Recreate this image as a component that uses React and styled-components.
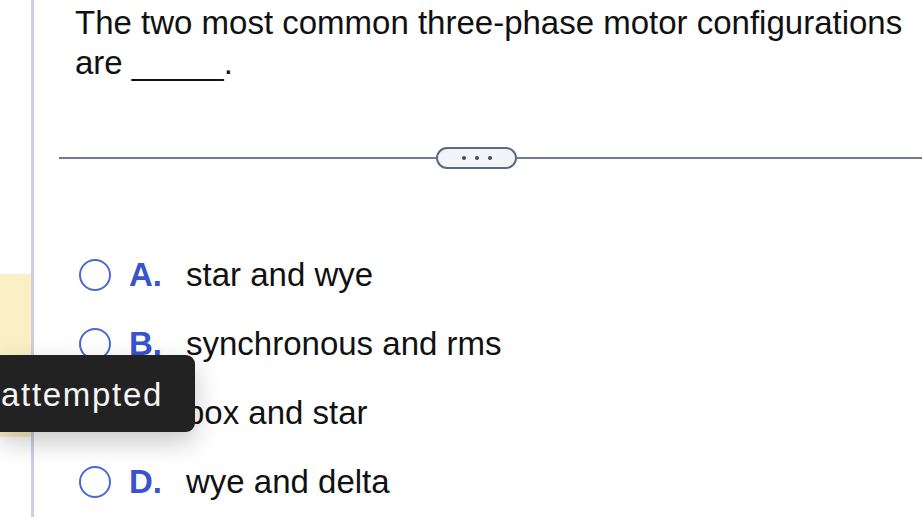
import React from 'react';
import styled, { createGlobalStyle } from 'styled-components';

const GlobalStyle = createGlobalStyle`
  html, body {
    margin: 0;
    padding: 0;
    background: #ffffff;
    font-family: "Liberation Sans", Arial, sans-serif;
    overflow: hidden;
  }
`;

const Page = styled.div`
  position: relative;
  display: flex;
  width: 922px;
  height: 517px;
  overflow: hidden;
`;

const Rail = styled.div`
  flex: 0 0 31px;
  border-right: 3px solid #cbd0e1;
  padding-top: 274px;
  box-sizing: content-box;
`;

const Highlight = styled.div`
  height: 163px;
  background: #fbefc6;
`;

const Main = styled.div`
  flex: 1;
  display: flex;
  flex-direction: column;
  min-width: 0;
`;

const Question = styled.p`
  margin: 3px 0 0 41px;
  font-size: 33px;
  line-height: 40px;
  color: #111;
  white-space: nowrap;
`;

const Divider = styled.div`
  display: flex;
  align-items: center;
  margin: 64px 0 0 25px;
  height: 22px;
`;

const Line = styled.div`
  height: 2px;
  background: #6e7c91;
  flex: ${(p) => (p.$grow ? '1' : `0 0 ${p.$width}px`)};
`;

const Pill = styled.div`
  flex: 0 0 81px;
  height: 22px;
  box-sizing: border-box;
  border: 2px solid #5b6a80;
  border-radius: 11px;
  background: #f3f4f7;
  display: flex;
  align-items: center;
  justify-content: center;
  gap: 9px;
`;

const Dot = styled.span`
  width: 4px;
  height: 4px;
  border-radius: 50%;
  background: #454b55;
`;

const Options = styled.div`
  display: flex;
  flex-direction: column;
  margin: 71px 0 0 45px;
`;

const Option = styled.div`
  display: flex;
  align-items: center;
  height: 69px;
`;

const Radio = styled.span`
  flex: 0 0 32px;
  height: 32px;
  box-sizing: border-box;
  border: 2.5px solid #4a68d6;
  border-radius: 50%;
`;

const Letter = styled.span`
  flex: 0 0 57px;
  margin-left: 18px;
  font-size: 33px;
  font-weight: bold;
  color: #3853cc;
`;

const Label = styled.span`
  font-size: 33px;
  color: #111;
`;

const Tooltip = styled.div`
  position: absolute;
  left: 0;
  top: 355px;
  width: 195px;
  height: 77px;
  box-sizing: border-box;
  padding: 22px 0 0 1px;
  background: #222222;
  border-radius: 0 9px 9px 0;
  box-shadow: 0 10px 26px rgba(0, 0, 0, 0.22);
  color: #f4f4f4;
  font-size: 33px;
  letter-spacing: 1.7px;
  line-height: 36px;
`;

const options = [
  { letter: 'A.', text: 'star and wye' },
  { letter: 'B.', text: 'synchronous and rms' },
  { letter: 'C.', text: 'box and star' },
  { letter: 'D.', text: 'wye and delta' },
];

export default function App() {
  return (
    <>
      <GlobalStyle />
      <Page>
        <Rail>
          <Highlight />
        </Rail>
        <Main>
          <Question>
            The two most common three-phase motor configurations
            <br />
            are _____.
          </Question>
          <Divider>
            <Line $width={377} />
            <Pill>
              <Dot />
              <Dot />
              <Dot />
            </Pill>
            <Line $grow />
          </Divider>
          <Options>
            {options.map((o) => (
              <Option key={o.letter}>
                <Radio />
                <Letter>{o.letter}</Letter>
                <Label>{o.text}</Label>
              </Option>
            ))}
          </Options>
        </Main>
        <Tooltip>attempted</Tooltip>
      </Page>
    </>
  );
}
